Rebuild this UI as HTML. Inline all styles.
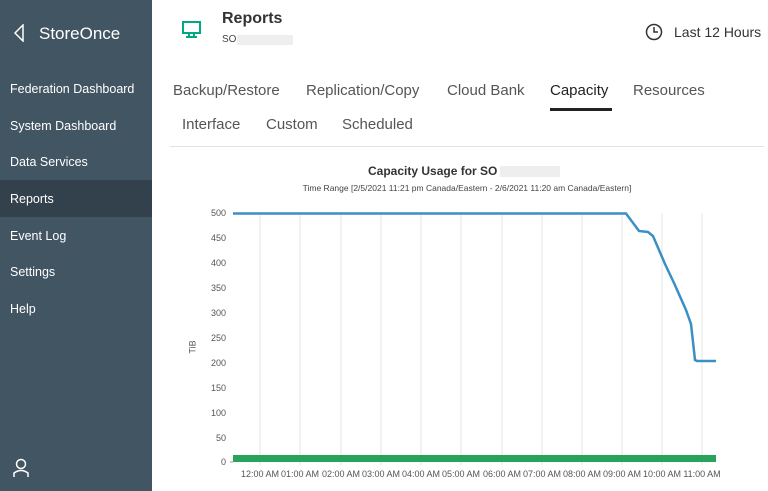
<!DOCTYPE html>
<html><head><style>
body{margin:0;width:768px;height:491px;overflow:hidden;font-family:"Liberation Sans",sans-serif;background:#fff;position:relative}
.sb{position:absolute;left:0;top:0;width:152px;height:491px;background:#425563;color:#fff}
.sb .it{position:absolute;left:10px;font-size:12.5px}
.act{position:absolute;left:0;top:180px;width:152px;height:37px;background:#33414d}
.tab{position:absolute;font-size:15px;color:#555}
.ax{position:absolute;font-size:9px;color:#555;text-align:right;width:30px;left:196px}
.xl{position:absolute;top:469px;font-size:9px;color:#555;width:40px;text-align:center;white-space:nowrap}
</style></head><body>
<div class="sb">
<svg style="position:absolute;left:13px;top:24px" width="12" height="18"><path d="M10 1 L2 9 L10 17 Z" fill="none" stroke="#fff" stroke-width="1.5"/></svg>
<div class="it" style="left:39px;top:24px;font-size:17px">StoreOnce</div>
<div class="it" style="top:82px">Federation Dashboard</div>
<div class="it" style="top:119px">System Dashboard</div>
<div class="it" style="top:155px">Data Services</div>
<div class="act"></div>
<div class="it" style="top:192px">Reports</div>
<div class="it" style="top:229px">Event Log</div>
<div class="it" style="top:265px">Settings</div>
<div class="it" style="top:302px">Help</div>
<svg style="position:absolute;left:12px;top:458px" width="18" height="20"><circle cx="9" cy="6" r="4.5" fill="none" stroke="#fff" stroke-width="1.5"/><path d="M2 19 V15 Q9 10 16 15 V19" fill="none" stroke="#fff" stroke-width="1.5"/></svg>
</div>
<svg style="position:absolute;left:182px;top:21px" width="20" height="18"><rect x="1" y="1" width="17" height="11" fill="none" stroke="#01a982" stroke-width="2"/><path d="M7 12 V16 M12 12 V16 M4 16 H15" stroke="#01a982" stroke-width="2"/></svg>
<div style="position:absolute;left:222px;top:10px;font-size:16px;font-weight:bold;color:#333">Reports</div>
<div style="position:absolute;left:222px;top:34px;font-size:10px;color:#444">SO</div>
<div style="position:absolute;left:237px;top:35px;width:56px;height:10px;background:#eee"></div>
<svg style="position:absolute;left:645px;top:23px" width="18" height="18"><circle cx="9" cy="9" r="7.5" fill="none" stroke="#333" stroke-width="1.5"/><path d="M9 4 V9 H13" fill="none" stroke="#333" stroke-width="1.5"/></svg>
<div style="position:absolute;left:674px;top:24px;font-size:14px;color:#333">Last 12 Hours</div>
<div class="tab" style="left:173px;top:82px">Backup/Restore</div>
<div class="tab" style="left:306px;top:82px">Replication/Copy</div>
<div class="tab" style="left:447px;top:82px">Cloud Bank</div>
<div class="tab" style="left:550px;top:82px;color:#222">Capacity</div>
<div style="position:absolute;left:550px;top:108px;width:62px;height:3px;background:#222"></div>
<div class="tab" style="left:633px;top:82px">Resources</div>
<div class="tab" style="left:182px;top:116px">Interface</div>
<div class="tab" style="left:266px;top:116px">Custom</div>
<div class="tab" style="left:342px;top:116px">Scheduled</div>
<div style="position:absolute;left:170px;top:146px;width:594px;height:1px;background:#e3e3e3"></div>
<div style="position:absolute;left:368px;top:164px;font-size:12px;font-weight:bold;color:#333">Capacity Usage for SO</div>
<div style="position:absolute;left:500px;top:166px;width:60px;height:11px;background:#eee"></div>
<div style="position:absolute;left:170px;top:183px;width:594px;text-align:center;font-size:8.5px;color:#444">Time Range [2/5/2021 11:21 pm Canada/Eastern - 2/6/2021 11:20 am Canada/Eastern]</div>
<div class="ax" style="top:208px">500</div><div class="ax" style="top:233px">450</div><div class="ax" style="top:258px">400</div><div class="ax" style="top:283px">350</div><div class="ax" style="top:308px">300</div><div class="ax" style="top:333px">250</div><div class="ax" style="top:358px">200</div><div class="ax" style="top:383px">150</div><div class="ax" style="top:408px">100</div><div class="ax" style="top:433px">50</div><div class="ax" style="top:457px">0</div>
<div style="position:absolute;left:186px;top:342px;font-size:9px;color:#555;transform:rotate(-90deg)">TiB</div>
<svg style="position:absolute;left:0;top:0" width="768" height="491">
<g stroke="#e6e6e6" stroke-width="1">
<path d="M260 213V465M300 213V465M341 213V465M381 213V465M421 213V465M461 213V465M502 213V465M542 213V465M582 213V465M622 213V465M662 213V465M702 213V465"/>
</g>
<path d="M230 462H233" stroke="#999"/>
<rect x="233" y="455" width="483" height="7" fill="#27a35b"/>
<polyline fill="none" stroke="#3a8fc4" stroke-width="2.5" points="233,213.5 626,213.5 639,231 648,232 653,236 665,264 674,283 686,310 691,324 695,360 697,361 716,361"/>
</svg>
<div class="xl" style="left:240px">12:00 AM</div>
<div class="xl" style="left:280px">01:00 AM</div>
<div class="xl" style="left:321px">02:00 AM</div>
<div class="xl" style="left:361px">03:00 AM</div>
<div class="xl" style="left:401px">04:00 AM</div>
<div class="xl" style="left:441px">05:00 AM</div>
<div class="xl" style="left:482px">06:00 AM</div>
<div class="xl" style="left:522px">07:00 AM</div>
<div class="xl" style="left:562px">08:00 AM</div>
<div class="xl" style="left:602px">09:00 AM</div>
<div class="xl" style="left:642px">10:00 AM</div>
<div class="xl" style="left:682px">11:00 AM</div>
</body></html>
